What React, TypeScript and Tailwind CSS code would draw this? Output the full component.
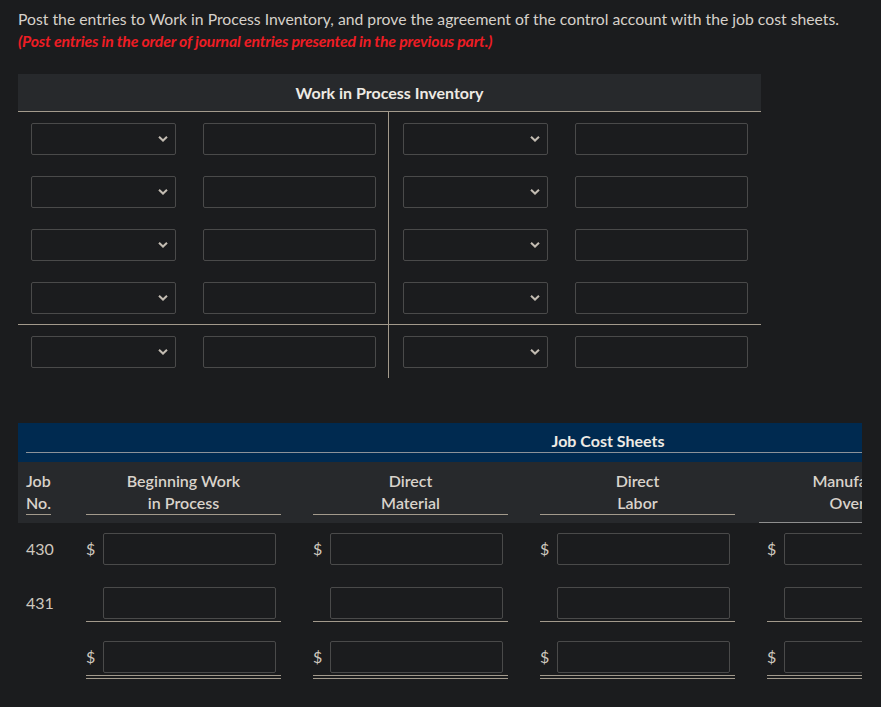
import React from "react";

// Work in Process T-account + job cost sheets
const font = { fontFamily: "Lato, 'Open Sans', sans-serif" };

function Chevron() {
  return (
    <svg width="10" height="7" viewBox="0 0 10 7" className="absolute right-[7px] top-1/2 -translate-y-1/2">
      <path d="M1 1.2 L5 5 L9 1.2" fill="none" stroke="#c2bbb1" strokeWidth="2" />
    </svg>
  );
}

function SelectBox() {
  return (
    <div className="relative h-8 w-[145px] rounded-[2px] border border-[#4a4a4a] bg-[#1b1c1e]">
      <Chevron />
    </div>
  );
}

function TextBox({ w = "w-[173px]" }: { w?: string }) {
  return <div className={`h-8 ${w} rounded-[2px] border border-[#4a4a4a] bg-[#1b1c1e]`} />;
}

function EntryRow({ left }: { left: boolean }) {
  return (
    <div className={`flex items-center gap-[27px] ${left ? "pl-[13px]" : "pl-[14px]"}`}>
      <SelectBox />
      <TextBox />
    </div>
  );
}

function TSide({ left }: { left: boolean }) {
  return (
    <div className={left ? "border-r border-[#a39a8c]" : ""}>
      <div className="flex flex-col gap-[21px] border-b border-[#a39a8c] pt-[11px] pb-[10px]">
        {[0, 1, 2, 3].map((i) => (
          <EntryRow key={i} left={left} />
        ))}
      </div>
      <div className="pt-[11px] pb-[10px]">
        <EntryRow left={left} />
      </div>
    </div>
  );
}

const columns = [
  { a: "Beginning Work", b: "in Process" },
  { a: "Direct", b: "Material" },
  { a: "Direct", b: "Labor" },
  { a: "Manufacturing", b: "Overhead" },
  { a: "Total", b: "" },
];

function MoneyCell({ dollar, line }: { dollar: boolean; line: "none" | "single" | "double" }) {
  const lineCls =
    line === "single"
      ? "border-b border-[#a39a8c] pb-[2px]"
      : line === "double"
      ? "border-b-[4px] border-double border-[#a39a8c] pb-[2px]"
      : "pb-[3px]";
  return (
    <div className={`mr-[32px] flex w-[195px] shrink-0 items-center ${lineCls}`}>
      <span className="w-[17px] text-[16px] text-[#cfc8bf]">{dollar ? "$" : ""}</span>
      <TextBox />
    </div>
  );
}

function JobRow({ job, dollar, line }: { job: string; dollar: boolean; line: "none" | "single" | "double" }) {
  return (
    <div className="flex items-start">
      <div className="flex h-8 w-[68px] shrink-0 items-center pl-2 text-[16px] text-[#cfc8bf]">{job}</div>
      {columns.map((c, i) => (
        <MoneyCell key={i} dollar={dollar} line={line} />
      ))}
    </div>
  );
}

export default function App() {
  return (
    <div className="min-h-screen overflow-hidden bg-[#1b1c1e] pb-10" style={font}>
      <div className="px-[18px] pt-2 text-[15.75px] leading-[22px]">
        <p className="text-[#d6d1ca]">
          Post the entries to Work in Process Inventory, and prove the agreement of the control account with the job cost sheets.
        </p>
        <p className="font-bold italic tracking-[-0.01em] text-[#ee1c24]">
          (Post entries in the order of journal entries presented in the previous part.)
        </p>
      </div>

      {/* T-account */}
      <div className="ml-[18px] mt-[22px] w-[743px]">
        <div className="flex h-[38px] items-center justify-center border-b border-[#a39a8c] bg-[#27292c] text-[16px] font-bold text-[#eeeae4]">
          Work in Process Inventory
        </div>
        <div className="grid grid-cols-[371px_372px]">
          <TSide left />
          <TSide left={false} />
        </div>
      </div>

      {/* Job cost sheets */}
      <div className="ml-[18px] mt-[45px] w-[844px] overflow-hidden">
        <div className="w-[1180px]">
          <div className="h-[39px] bg-[#002a50] px-2 pt-[8px]">
            <div className="border-b border-[#8c9299] pb-[1px] text-center text-[16px] font-bold leading-[20px] text-[#eeeae4]">
              Job Cost Sheets
            </div>
          </div>
          <div className="flex h-[61px] items-start bg-[#27292c] pt-[8px] text-[16px] font-semibold leading-[22px] text-[#d9d3cb]">
            <div className="w-[68px] shrink-0 pl-2">
              <div className="inline-block border-b border-[#a39a8c]">
                Job
                <br />
                No.
              </div>
            </div>
            {columns.map((c, i) => (
              <div
                key={i}
                className={`mr-[32px] w-[195px] shrink-0 text-center ${
                  i === 3 ? "-ml-2 w-[203px] border-b border-[#8e8e8e] pb-[8px] pl-2" : "border-b border-[#a39a8c]"
                }`}
              >
                {c.a}
                <br />
                {c.b}
              </div>
            ))}
          </div>
          <div className="flex flex-col gap-[19px] pt-[10px]">
            <JobRow job="430" dollar line="none" />
            <JobRow job="431" dollar={false} line="single" />
            <JobRow job="" dollar line="double" />
          </div>
        </div>
      </div>
    </div>
  );
}
